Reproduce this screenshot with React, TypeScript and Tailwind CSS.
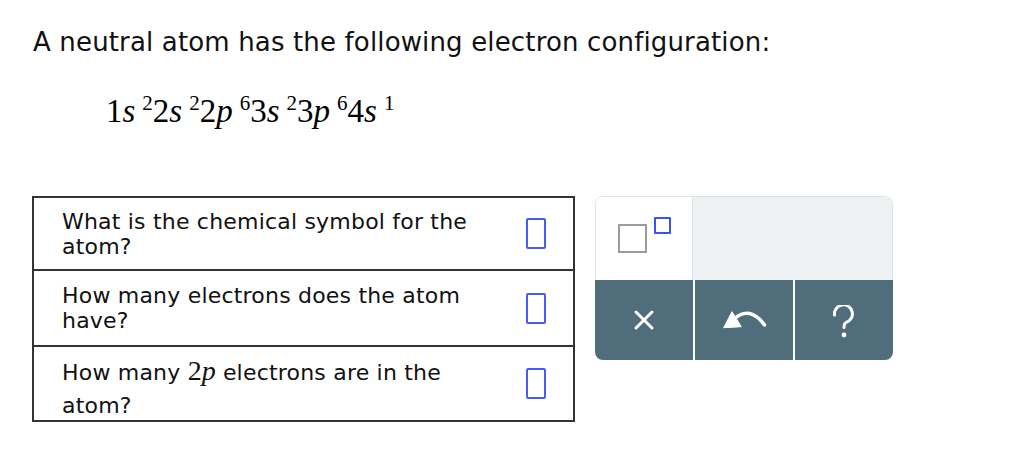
const terms: [string, string, string][] = [
  ["1", "s", "2"],
  ["2", "s", "2"],
  ["2", "p", "6"],
  ["3", "s", "2"],
  ["3", "p", "6"],
  ["4", "s", "1"],
];

function Formula() {
  return (
    <div className="mt-[36px] h-[40px] pl-[106px] font-['Liberation_Serif',serif] text-[33px] leading-[36px] text-black whitespace-nowrap">
      {terms.map(([n, l, e], i) => (
        <span key={i}>
          {n}
          <i>{l}</i>
          <span className="ml-[7px] text-[21px] leading-none align-[12px]">{e}</span>
        </span>
      ))}
    </div>
  );
}

function AnswerBox() {
  return <div className="w-[20px] h-[31px] border-2 border-[#4a5af5] rounded-[2px]" />;
}

function Row({ children, h, top }: { children: React.ReactNode; h: string; top?: boolean }) {
  return (
    <div className={`flex items-center ${h} ${top ? "" : "border-t-2 border-[#333]"}`}>
      <div className="w-[440px] pl-[28px] text-[22px] leading-[25px] tracking-[0.2px]">{children}</div>
      <div className="ml-auto mr-[27px]">
        <AnswerBox />
      </div>
    </div>
  );
}

function Keypad() {
  return (
    <div className="w-[298px] rounded-[8px] overflow-hidden">
      <div className="flex h-[84px] border border-b-0 border-[#dde3e6] rounded-t-[8px] overflow-hidden">
        <div className="w-[97px] bg-white border-r border-[#dde3e6] flex justify-center items-start pt-[20px]">
          <div className="mt-[7px] w-[29px] h-[29px] border-2 border-[#9b9b9b]" />
          <div className="ml-[7px] w-[17px] h-[17px] border-2 border-[#3b50f5] rounded-[1px]" />
        </div>
        <div className="flex-1 bg-[#eef1f2]" />
      </div>
      <div className="flex h-[80px] bg-[#4f6d7a]">
        <div className="w-[98px] flex items-center justify-center">
          <svg width="22" height="22" viewBox="0 0 22 22">
            <path d="M3 3 L19 19 M19 3 L3 19" stroke="white" strokeWidth="3" strokeLinecap="round" />
          </svg>
        </div>
        <div className="w-[2px] bg-white" />
        <div className="w-[98px] flex items-center justify-center">
          <svg width="45" height="21" viewBox="0 0 45 21" className="mt-[-2px]">
            <polygon points="1.7,18.7 10,2.7 19.3,17.7" fill="white" strokeLinejoin="round" stroke="white" strokeWidth="1" />
            <path d="M12 10 Q28 -4 42.5 16" stroke="white" strokeWidth="3.5" fill="none" strokeLinecap="round" />
          </svg>
        </div>
        <div className="w-[2px] bg-white" />
        <div className="flex-1 flex items-center justify-center">
          <svg width="24" height="33" viewBox="0 0 24 33" className="mt-[2px]">
            <path
              d="M2.5 10 A9 9 0 1 1 14 17.5 C12.5 18.3 12 19.5 12 22.5"
              stroke="white"
              strokeWidth="3"
              fill="none"
              strokeLinecap="round"
            />
            <circle cx="12" cy="30" r="2.4" fill="white" />
          </svg>
        </div>
      </div>
    </div>
  );
}

export default function App() {
  return (
    <div className="w-[1024px] h-[473px] bg-white font-['DejaVu_Sans',sans-serif] text-[#111]">
      <div className="pl-[33px] pt-[27px] text-[26px] leading-[30px] tracking-[0.15px]">
        A neutral atom has the following electron configuration:
      </div>
      <Formula />
      <div className="mt-[63px] pl-[32px] flex items-start gap-[20px]">
        <div className="w-[543px] border-2 border-[#333]">
          <Row h="h-[71px]" top>
            What is the chemical symbol for the atom?
          </Row>
          <Row h="h-[76px]">How many electrons does the atom have?</Row>
          <Row h="h-[75px]">
            How many{" "}
            <span className="font-['Liberation_Serif',serif] text-[28px] leading-[44px] tracking-normal">
              2<i>p</i>
            </span>{" "}
            electrons are in the atom?
          </Row>
        </div>
        <Keypad />
      </div>
    </div>
  );
}
